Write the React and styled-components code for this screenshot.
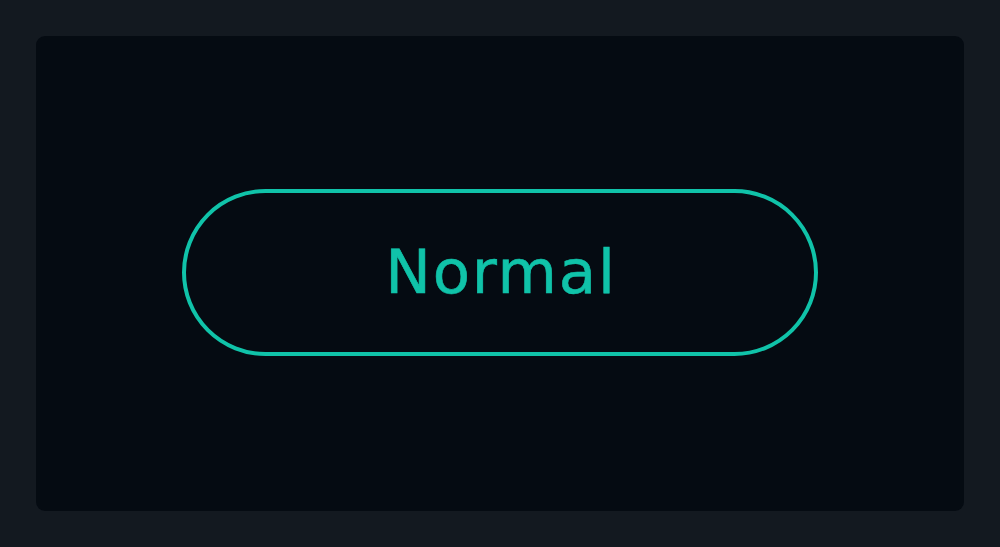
import React from "react";
import styled, { createGlobalStyle } from "styled-components";

const Global = createGlobalStyle`
  html, body { margin: 0; padding: 0; background: #131920; }
  #root { width: 1000px; height: 547px; }
`;

const Frame = styled.div`
  box-sizing: border-box;
  width: 1000px;
  height: 547px;
  padding: 36px;
  background: #131920;
  display: flex;
`;

const Panel = styled.div`
  flex: 1;
  background: #050b12;
  border-radius: 9px;
  display: flex;
  align-items: center;
  justify-content: center;
  padding-bottom: 2px;
`;

const Button = styled.button`
  box-sizing: border-box;
  width: 636px;
  height: 167px;
  margin-top: -1px;
  border: 4px solid ${(p) => p.$color};
  border-radius: 84px;
  background: transparent;
  color: ${(p) => p.$color};
  font-family: "DejaVu Sans", "Noto Sans", sans-serif;
  font-size: 61px;
  font-weight: 400;
  letter-spacing: 1.8px;
  -webkit-text-stroke: 0.6px ${(p) => p.$color};
  display: flex;
  align-items: center;
  justify-content: center;
  padding: 0 0 1px 2px;
  cursor: pointer;
`;

export default function App() {
  return (
    <>
      <Global />
      <Frame>
        <Panel>
          <Button $color="#10c3a9">Normal</Button>
        </Panel>
      </Frame>
    </>
  );
}
